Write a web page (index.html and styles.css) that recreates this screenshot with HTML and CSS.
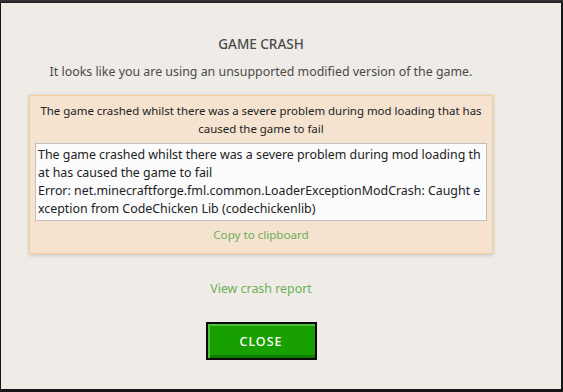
FILE: index.html
```html
<!DOCTYPE html>
<html>
<head>
<meta charset="utf-8">
<link rel="stylesheet" href="styles.css">
</head>
<body>
<div class="backdrop">
  <div class="dialog">
    <div class="content">
      <h1 class="title">GAME CRASH</h1>
      <p class="subtitle">It looks like you are using an unsupported modified version of the game.</p>
      <div class="crash-box">
        <p class="crash-summary">The game crashed whilst there was a severe problem during mod loading that has caused the game to fail</p>
        <div class="crash-log">The game crashed whilst there was a severe problem during mod loading that has caused the game to fail<br>Error: net.minecraftforge.fml.common.LoaderExceptionModCrash: Caught exception from CodeChicken Lib (codechickenlib)</div>
        <a class="link copy">Copy to clipboard</a>
      </div>
      <a class="link report">View crash report</a>
      <button class="close-btn">CLOSE</button>
    </div>
  </div>
</div>
</body>
</html>
```

FILE: styles.css
```css
* { box-sizing: border-box; }
html, body {
  margin: 0;
  padding: 0;
  width: 563px;
  height: 392px;
  overflow: hidden;
  background: #141414;
  font-family: "Noto Sans", "Open Sans", sans-serif;
}
.backdrop {
  width: 563px;
  height: 392px;
  padding: 3px 2px 3px 1px;
  background: linear-gradient(#3a3a3a, #161616 4px);
}
.dialog {
  width: 560px;
  height: 386px;
  background: #efece7;
  padding: 31px 40px 0 0;
}
.content {
  display: flex;
  flex-direction: column;
  align-items: center;
}
.title {
  margin: 0;
  font-size: 13.5px;
  line-height: 20px;
  font-weight: 500;
  color: #4a4a4a;
}
.subtitle {
  margin: 9px 0 0;
  font-size: 12.4px;
  line-height: 18px;
  color: #4a4a4a;
}
.crash-box {
  margin-top: 14px;
  width: 464px;
  background: #f5e2cf;
  border: 1px solid #f6cd98;
  box-shadow: 0 1px 4px rgba(0, 0, 0, 0.18);
  padding: 6px 5px 9px;
  display: flex;
  flex-direction: column;
  align-items: center;
}
.crash-summary {
  margin: 0;
  font-size: 11.45px;
  line-height: 18px;
  text-align: center;
  color: #222222;
  padding: 0 4px;
}
.crash-log {
  margin-top: 5px;
  width: 452px;
  background: #fbfbfb;
  border: 1px solid #c3bfbb;
  padding: 2px 3px 2px 2px;
  font-size: 12.4px;
  line-height: 18px;
  color: #222222;
  word-break: break-all;
}
.link {
  color: #6bb05a;
  font-size: 11.6px;
  line-height: 18px;
  cursor: pointer;
}
.copy { margin-top: 5px; }
.report {
  margin-top: 26px;
  font-size: 12.4px;
}
.close-btn {
  margin-top: 24px;
  width: 111px;
  height: 38px;
  border: 2px solid #0a0a0a;
  background: #18a000;
  box-shadow: inset 2px 2px 0 #4fc03c, inset 0 -3px 0 #0f7a00;
  color: #ffffff;
  font-family: "Noto Sans", sans-serif;
  font-size: 12.5px;
  font-weight: 500;
  letter-spacing: 1px;
  padding: 0;
}
```
